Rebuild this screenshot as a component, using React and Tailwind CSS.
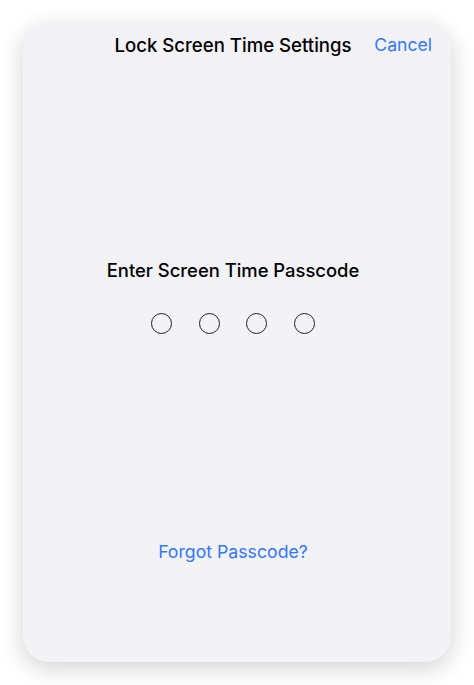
export default function App() {
  const dots = [0, 1, 2, 3];

  return (
    <div className="min-h-screen bg-white p-[23px]" style={{ fontFamily: 'Inter, "Noto Sans", sans-serif' }}>
      <div className="flex h-[639px] w-[428px] flex-col items-center rounded-[26px] bg-[#f2f2f7] shadow-[0_6px_24px_rgba(0,0,0,0.18)]">
        {/* Nav bar */}
        <div className="grid h-[44px] w-full grid-cols-[1fr_auto_1fr] items-center pr-[8px]">
          <div />
          <h1 className="text-[18.6px] font-medium leading-[22px] text-black">
            Lock Screen Time Settings
          </h1>
          <div className="flex justify-end pr-[11px]">
            <button className="text-[17.6px] leading-[22px] text-[#3478f6]">Cancel</button>
          </div>
        </div>

        {/* Passcode prompt */}
        <p className="mt-[192px] pr-[8px] text-[18.4px] font-medium leading-[22px] text-black">
          Enter Screen Time Passcode
        </p>
        <div className="mt-[32px] flex gap-[26.5px] pr-[8px]">
          {dots.map((d) => (
            <span key={d} className="block h-[21px] w-[21px] rounded-full border-[1.5px] border-[#222]" />
          ))}
        </div>

        <button className="mt-[207px] pr-[8px] text-[17.7px] leading-[22px] text-[#3478f6]">
          Forgot Passcode?
        </button>
      </div>
    </div>
  );
}
